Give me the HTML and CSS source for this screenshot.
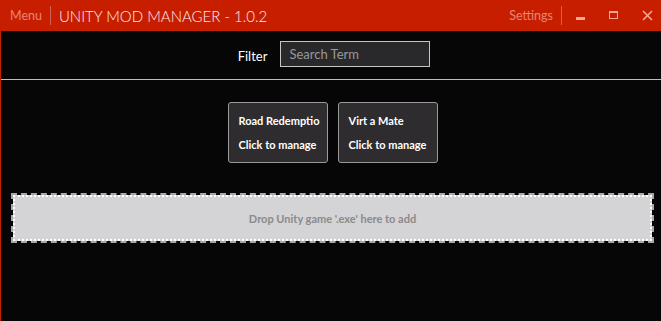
FILE: index.html
```html
<!DOCTYPE html>
<html lang="en-US">

<head>
  <meta charset="utf-8">
  <link rel="stylesheet" href="styles.css">
</head>

<body>
  <div class="window">
    <div class="titlebar">
      <span class="menu">Menu</span>
      <span class="divider"></span>
      <span class="title">UNITY MOD MANAGER - 1.0.2</span>
      <span class="spacer"></span>
      <span class="settings">Settings</span>
      <span class="divider"></span>
      <div class="win-buttons">
        <svg class="win-btn" width="33" height="31" viewBox="0 0 33 31">
          <rect x="14" y="17" width="9" height="3" fill="#f1a898" />
        </svg>
        <svg class="win-btn" width="33" height="31" viewBox="0 0 33 31">
          <rect x="14.5" y="11.5" width="8" height="7" fill="none" stroke="#f1a898" />
          <rect x="14" y="11" width="9" height="2" fill="#f1a898" />
        </svg>
        <svg class="win-btn" width="33" height="31" viewBox="0 0 33 31">
          <path d="M15 11 L24 20 M24 11 L15 20" stroke="#f1a898" stroke-width="1.6" />
        </svg>
      </div>
    </div>

    <div class="filter-row">
      <label for="search">Filter</label>
      <input type="text" id="search" placeholder="Search Term">
    </div>

    <div class="games">
      <div class="game-card">
        <span>Road Redemptio</span>
        <span>Click to manage</span>
      </div>
      <div class="game-card">
        <span>Virt a Mate</span>
        <span>Click to manage</span>
      </div>
    </div>

    <div class="drop-zone">
      <div class="drop-inner">Drop Unity game '.exe' here to add</div>
    </div>
  </div>
</body>

</html>
```

FILE: styles.css
```css
html, body {
  margin: 0;
  height: 100%;
}

body {
  background-color: #060606;
  font-family: Lato, "Noto Sans", sans-serif;
  color: #ffffff;
}

.window {
  height: 100%;
  border-left: 1px solid #c81e00;
  box-sizing: border-box;
}

.titlebar {
  display: flex;
  align-items: center;
  height: 31px;
  background-color: #c81e00;
  padding-left: 9px;
}

.menu,
.settings {
  font-size: 12.5px;
  color: #e98575;
}

.divider {
  width: 1px;
  height: 19px;
  background-color: #d9604e;
  margin: 0 8px;
}

.settings + .divider { margin-right: 0;}

.title {
  font-size: 15px;
  font-weight: 300;
  color: #fbe9ee;
}

.spacer { flex: 1;}

.win-buttons { display: flex;}

.win-btn { display: block;}

.filter-row {
  display: flex;
  justify-content: center;
  align-items: center;
  gap: 13px;
  height: 48px;
  padding-left: 6px;
  border-bottom: 1px solid #bdbdbd;
  font-size: 13px;
}

.filter-row label { margin-top: 2px;}

.filter-row input {
  width: 150px;
  height: 26px;
  box-sizing: border-box;
  background-color: #29282a;
  border: 1px solid #c6c6c6;
  color: #ffffff;
  font-family: inherit;
  font-size: 13px;
  padding: 0 8px;
  margin-top: -2px;
}

.filter-row input::placeholder { color: #9a9a9a;}

.games {
  display: flex;
  justify-content: center;
  gap: 10px;
  margin-top: 22px;
  padding-left: 3px;
}

.game-card {
  display: flex;
  flex-direction: column;
  justify-content: center;
  gap: 11px;
  width: 100px;
  height: 61px;
  box-sizing: border-box;
  padding: 0 10px;
  background-color: #2e2c2e;
  border: 1px solid #9a9a9a;
  border-radius: 3px;
  font-size: 11px;
  font-weight: bold;
  white-space: nowrap;
  overflow: hidden;
}

.drop-zone {
  margin: 30px 7px 0 10px;
  border: 2px dashed #a8a8a8;
}

.drop-inner {
  height: 42px;
  border: 2px dotted #ffffff;
  background-color: #d4d3d5;
  display: flex;
  align-items: center;
  justify-content: center;
  font-size: 11px;
  font-weight: bold;
  color: #8b8a8c;
}
```
